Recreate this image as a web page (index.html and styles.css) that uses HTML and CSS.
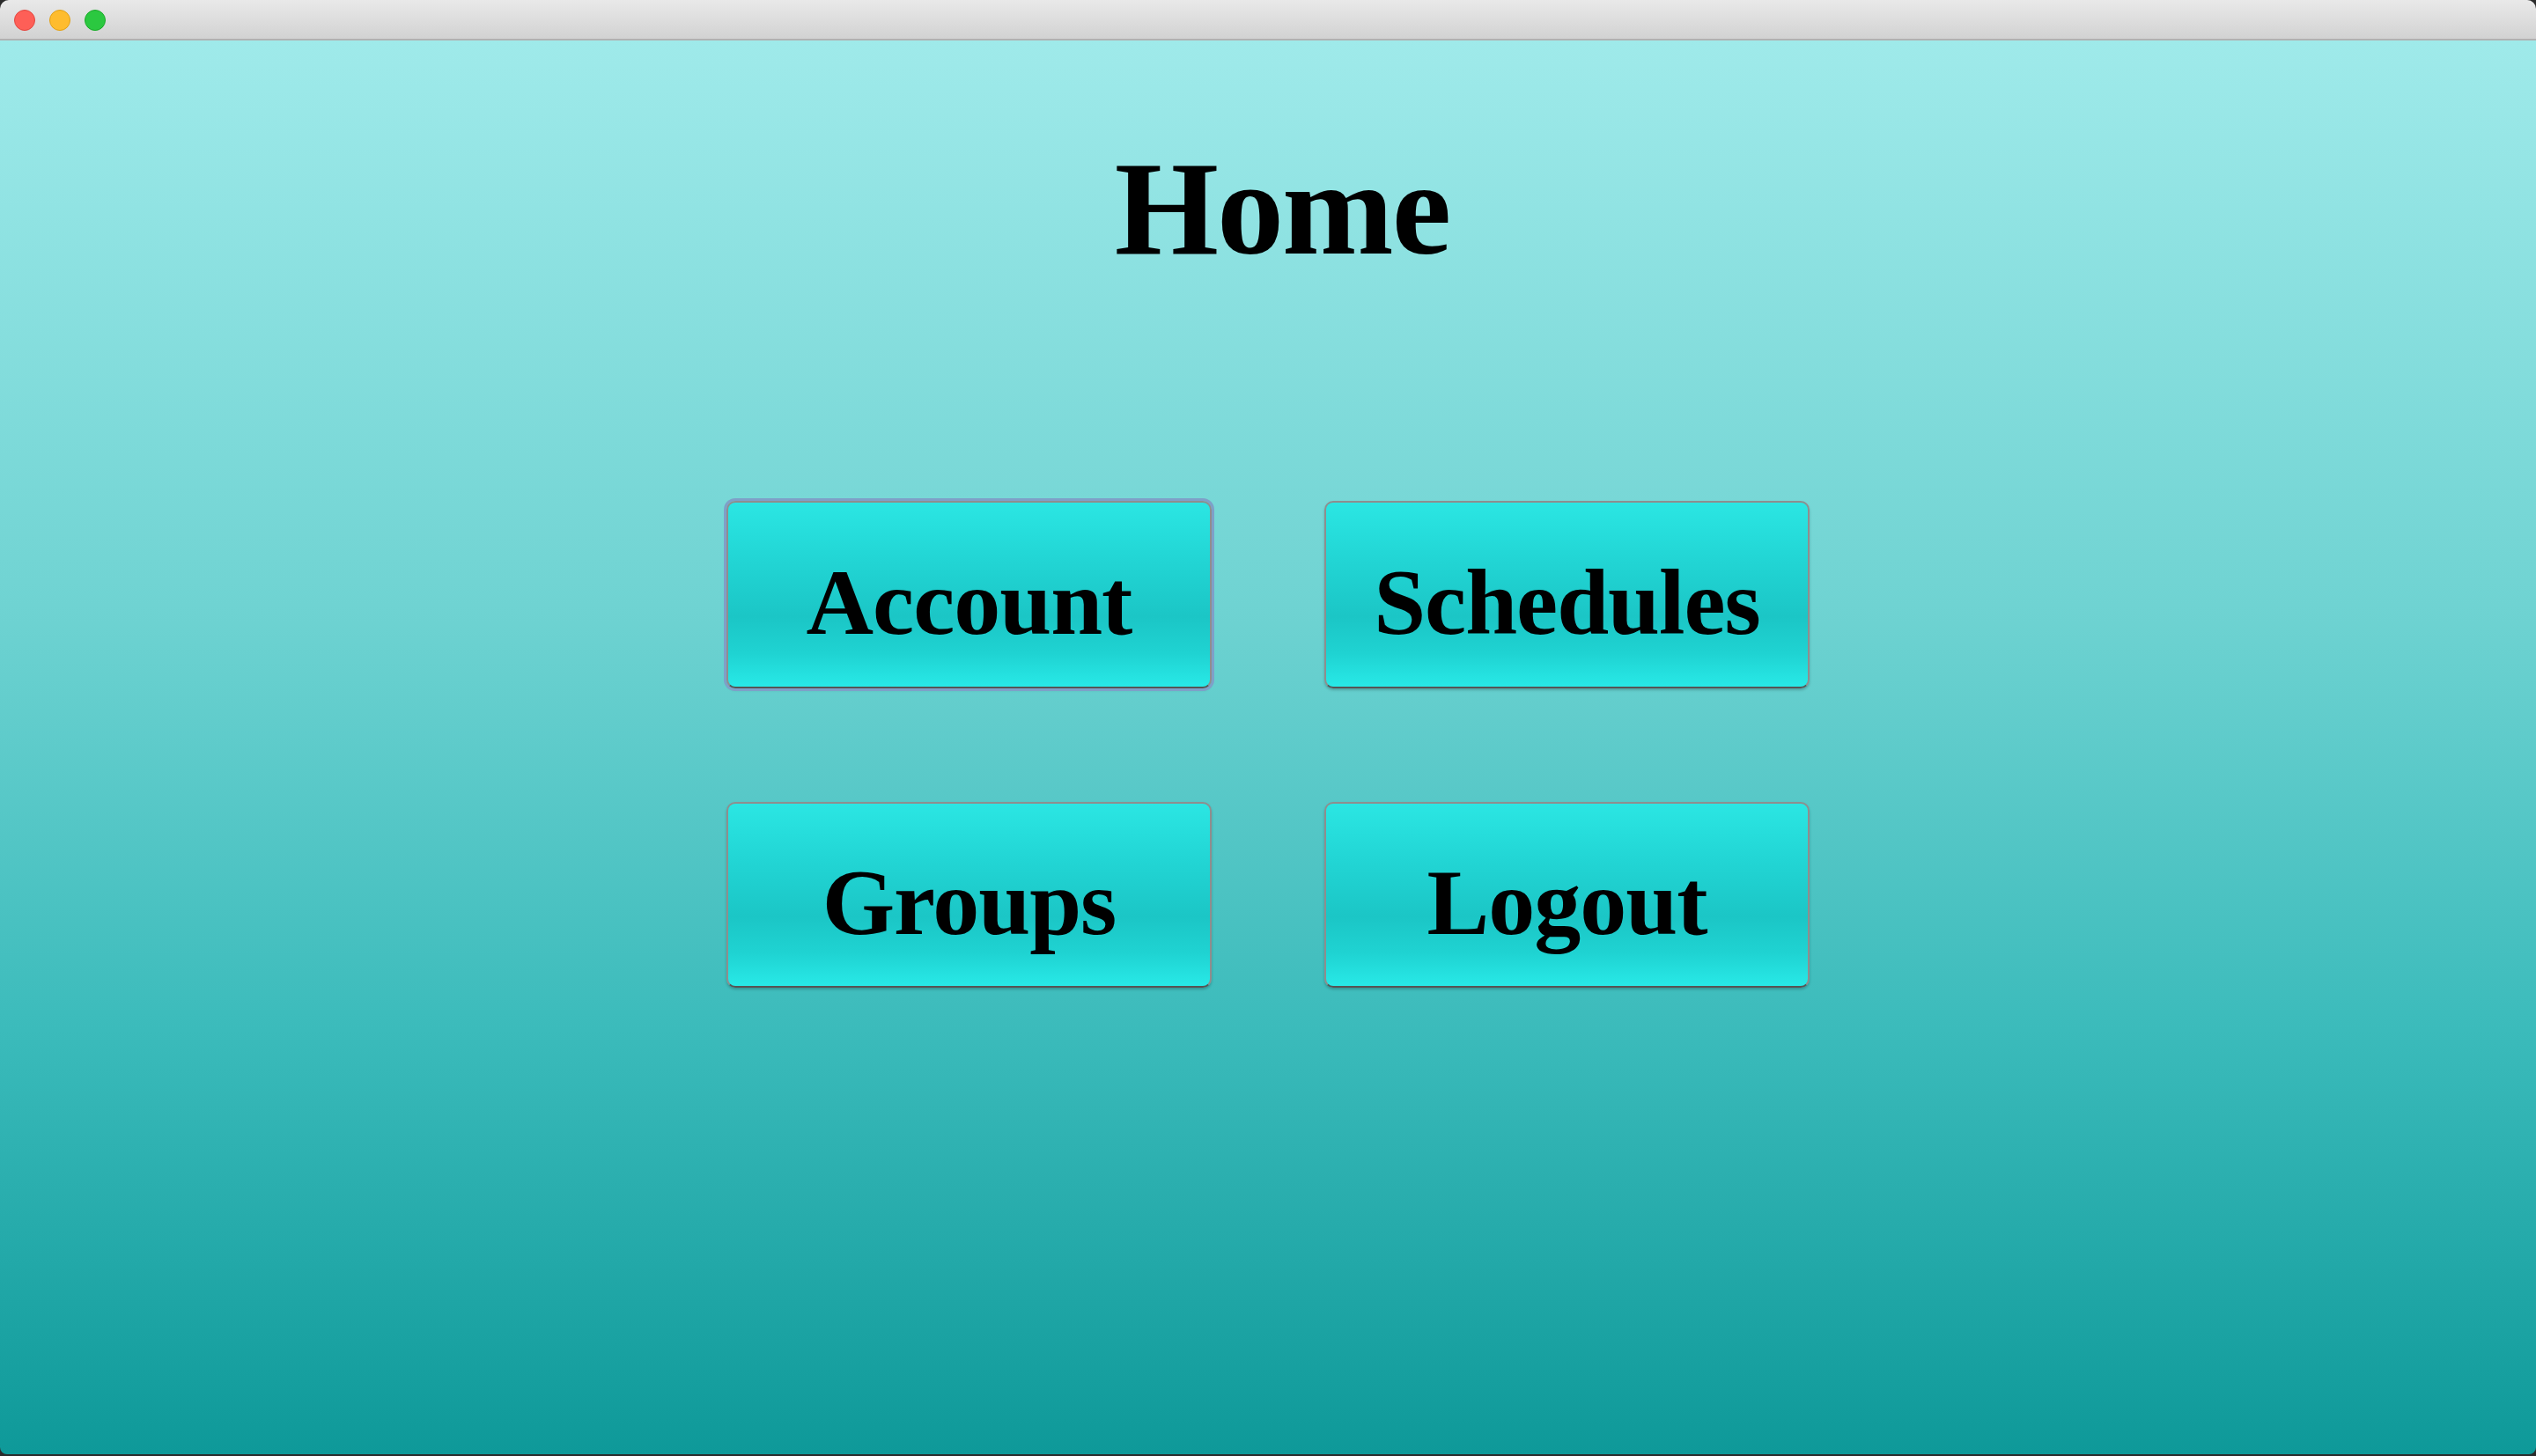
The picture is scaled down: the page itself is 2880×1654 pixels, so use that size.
FILE: index.html
```html
<!DOCTYPE html>
<html lang="en">
<head>
<meta charset="utf-8">
<title>Home</title>
<link rel="stylesheet" href="styles.css">
</head>
<body>
  <div class="window">
    <div class="titlebar">
      <span class="light red"></span>
      <span class="light yellow"></span>
      <span class="light green"></span>
    </div>
    <main class="content">
      <h1 class="title">Home</h1>
      <div class="grid">
        <button class="btn focused">Account</button>
        <button class="btn">Schedules</button>
        <button class="btn">Groups</button>
        <button class="btn">Logout</button>
      </div>
    </main>
  </div>
</body>
</html>
```

FILE: styles.css
```css
html, body {
  margin: 0;
  padding: 0;
}
body {
  width: 2880px;
  height: 1654px;
  background: #2b2b2b;
  overflow: hidden;
}
.window {
  height: 1652px;
  display: flex;
  flex-direction: column;
  border-radius: 10px 10px 8px 8px;
  overflow: hidden;
}
.titlebar {
  height: 46px;
  flex: 0 0 46px;
  box-sizing: border-box;
  background: linear-gradient(#e9e9e9, #d2d2d2);
  border-bottom: 2px solid #b1b1b1;
  display: flex;
  align-items: center;
  gap: 16px;
  padding-left: 16px;
  padding-top: 2px;
}
.light {
  width: 24px;
  height: 24px;
  border-radius: 50%;
  box-sizing: border-box;
}
.red { background: #fe5f57; border: 1px solid #e2463f; }
.yellow { background: #febc2e; border: 1px solid #e1a116; }
.green { background: #2bc840; border: 1px solid #1aab29; }
.content {
  flex: 1;
  background: linear-gradient(#9feaea 0%, #6fd3d2 40%, #3bbbbb 70%, #0e9999 100%);
  display: flex;
  flex-direction: column;
  align-items: center;
}
.title {
  margin: 115px 0 0 32px;
  font-family: "Liberation Serif", "Times New Roman", serif;
  font-weight: 700;
  font-size: 152px;
  line-height: 1;
  color: #000;
  letter-spacing: -2px;
}
.grid {
  margin-top: 256px;
  display: grid;
  grid-template-columns: 551px 551px;
  grid-template-rows: 213px 211px;
  column-gap: 128px;
  row-gap: 129px;
}
.btn {
  box-sizing: border-box;
  border: 2px solid #8e8e8e;
  border-bottom-color: #555;
  border-radius: 10px;
  background: linear-gradient(#2be6e3 0%, #22d6d5 30%, #1bc6c6 62%, #1fd3d2 82%, #28e9e7 100%);
  box-shadow: 0 2px 3px rgba(0, 0, 0, 0.22);
  font-family: "Liberation Serif", "Times New Roman", serif;
  font-weight: 700;
  font-size: 106px;
  line-height: 1;
  color: #000;
  padding: 18px 0 0 0;
  display: flex;
  align-items: center;
  justify-content: center;
  letter-spacing: -1px;
}
.btn.focused {
  box-shadow: 0 0 0 3px #7ea0c8, 0 2px 3px rgba(0, 0, 0, 0.22);
}
```
